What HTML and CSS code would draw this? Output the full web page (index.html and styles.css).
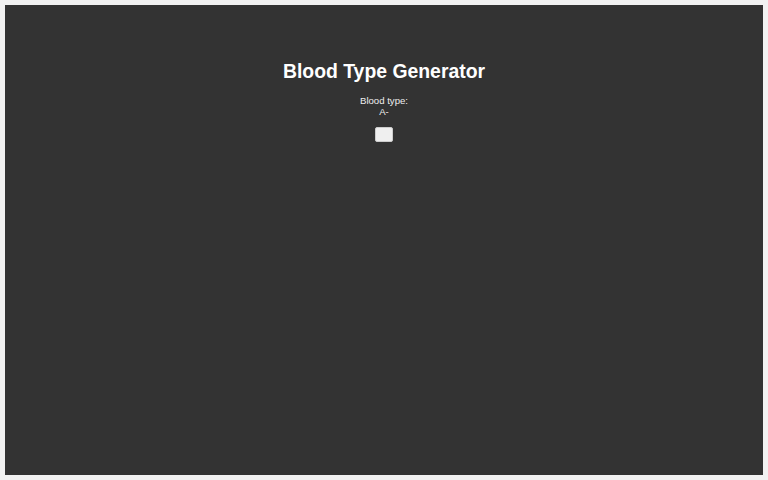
FILE: index.html
```html
<!DOCTYPE html>
<html lang="en">
<head>
    <meta charset="UTF-8">
    <meta name="viewport" content="width=device-width, initial-scale=1.0">
    <title>Blood Type Generator</title>
    <link rel="stylesheet" href="styles.css">
</head>
<body>
    <div class="app">
        <h1>Blood Type Generator</h1>
        <div class="result">
            <div class="label">Blood type:</div>
            <div id="blood-type">A-</div>
        </div>
        <button class="btn" id="generate"></button>
    </div>
</body>
</html>
```

FILE: styles.css
```css
body {
    font-family: "Liberation Sans", Arial, sans-serif;
    background-color: #f2f2f2;
    margin: 0;
    padding: 5px;
}

.app {
    height: 470px;
    background: #333333;
    color: #ffffff;
    text-align: center;
    padding-top: 42px;
    box-sizing: border-box;
}

.app h1 {
    font-size: 19.4px;
    margin: 13px 0 12px;
}

.result {
    font-size: 9.6px;
    line-height: 11px;
    color: #eeeeee;
}

.btn {
    width: 18px;
    height: 15px;
    margin-top: 10px;
    padding: 0;
    border: 1px solid #cccccc;
    border-radius: 2px;
    background: #efefef;
}
```
